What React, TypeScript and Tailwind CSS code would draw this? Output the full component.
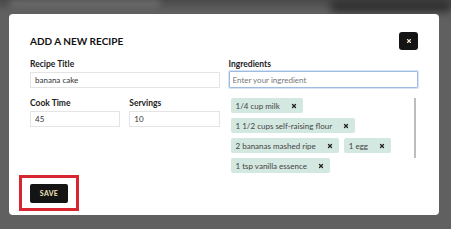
import { X } from "lucide-react";

const ingredients = [
  "1/4 cup milk",
  "1 1/2 cups self-raising flour",
  "2 bananas mashed ripe",
  "1 egg",
  "1 tsp vanilla essence",
];

function Field({ label, value, className = "" }: { label: string; value: string; className?: string }) {
  return (
    <div className={"flex flex-col " + className}>
      <label className="text-[8.5px] font-bold text-[#222] leading-[10px] mb-[3px]">{label}</label>
      <input
        readOnly
        value={value}
        className="h-[16px] border border-[#e4e4e4] px-[4px] text-[8px] text-[#333] outline-none"
      />
    </div>
  );
}

export default function App() {
  return (
    <div
      className="relative w-[451px] h-[229px] overflow-hidden bg-[#606060]"
      style={{ fontFamily: 'Lato, "Open Sans", sans-serif' }}
    >
      {/* page behind the overlay */}
      <div className="absolute left-0 right-0 top-0 h-[12px] bg-gradient-to-b from-[#4a4a4a] to-[#606060]" />
      <div className="absolute left-[10px] top-[0px] w-[150px] h-[8px] bg-[#6a6a6a] blur-[3px]" />
      <div className="absolute right-[0px] top-[0px] w-[120px] h-[12px] bg-[#2e2e2e] blur-[4px]" />

      {/* modal */}
      <div className="absolute left-[9px] top-[14px] w-[430px] h-[201px] bg-white rounded-[4px] px-[21px] pt-[18px]">
        <div className="flex items-center justify-between">
          <h2 className="text-[10px] font-bold text-[#111] leading-[12px]">ADD A NEW RECIPE</h2>
          <button className="w-[19px] h-[18px] bg-[#141414] rounded-[3px] flex items-center justify-center">
            <X className="w-[6px] h-[6px] text-[#f3e9c6]" strokeWidth={4.5} />
          </button>
        </div>

        <div className="grid grid-cols-2 gap-x-[9px] mt-[9px]">
          <div className="flex flex-col">
            <Field label="Recipe Title" value="banana cake" />
            <div className="grid grid-cols-2 gap-x-[9px] mt-[10px]">
              <Field label="Cook Time" value="45" />
              <Field label="Servings" value="10" />
            </div>
          </div>

          <div className="flex flex-col">
            <label className="text-[8.5px] font-bold text-[#222] leading-[10px] mb-[2px]">Ingredients</label>
            <input
              readOnly
              placeholder="Enter your ingredient"
              className="h-[17px] border border-[#9ebbe0] rounded-[1px] px-[3px] text-[8px] text-[#333] placeholder:text-[#777] outline-none shadow-[0_0_0_1px_#d5e3f5]"
            />
            <div className="flex mt-[10px]">
              <div className="flex-1 flex flex-wrap content-start gap-x-[5px] gap-y-[5px] pl-[2px]">
                {ingredients.map((item) => (
                  <span
                    key={item}
                    className="h-[15px] flex items-center bg-[#d3e8e0] rounded-[2px] pl-[5px] pr-[6px] text-[8px] text-[#444] leading-none"
                  >
                    {item}
                    <X className="w-[6px] h-[6px] ml-[11px] text-[#222]" strokeWidth={5} />
                  </span>
                ))}
              </div>
              <div className="w-[2px] h-[60px] bg-[#bdbdbd] ml-[2px] mr-[2px]" />
            </div>
          </div>
        </div>

        {/* save */}
        <div className="absolute left-[10px] top-[161px] w-[60px] h-[36px] border-[3px] border-[#d7262f] flex items-center justify-center">
          <button className="w-[38px] h-[19px] bg-[#141414] rounded-[2px] text-[7px] font-bold text-[#efe3bd] tracking-[0.3px]">
            SAVE
          </button>
        </div>
      </div>
    </div>
  );
}
